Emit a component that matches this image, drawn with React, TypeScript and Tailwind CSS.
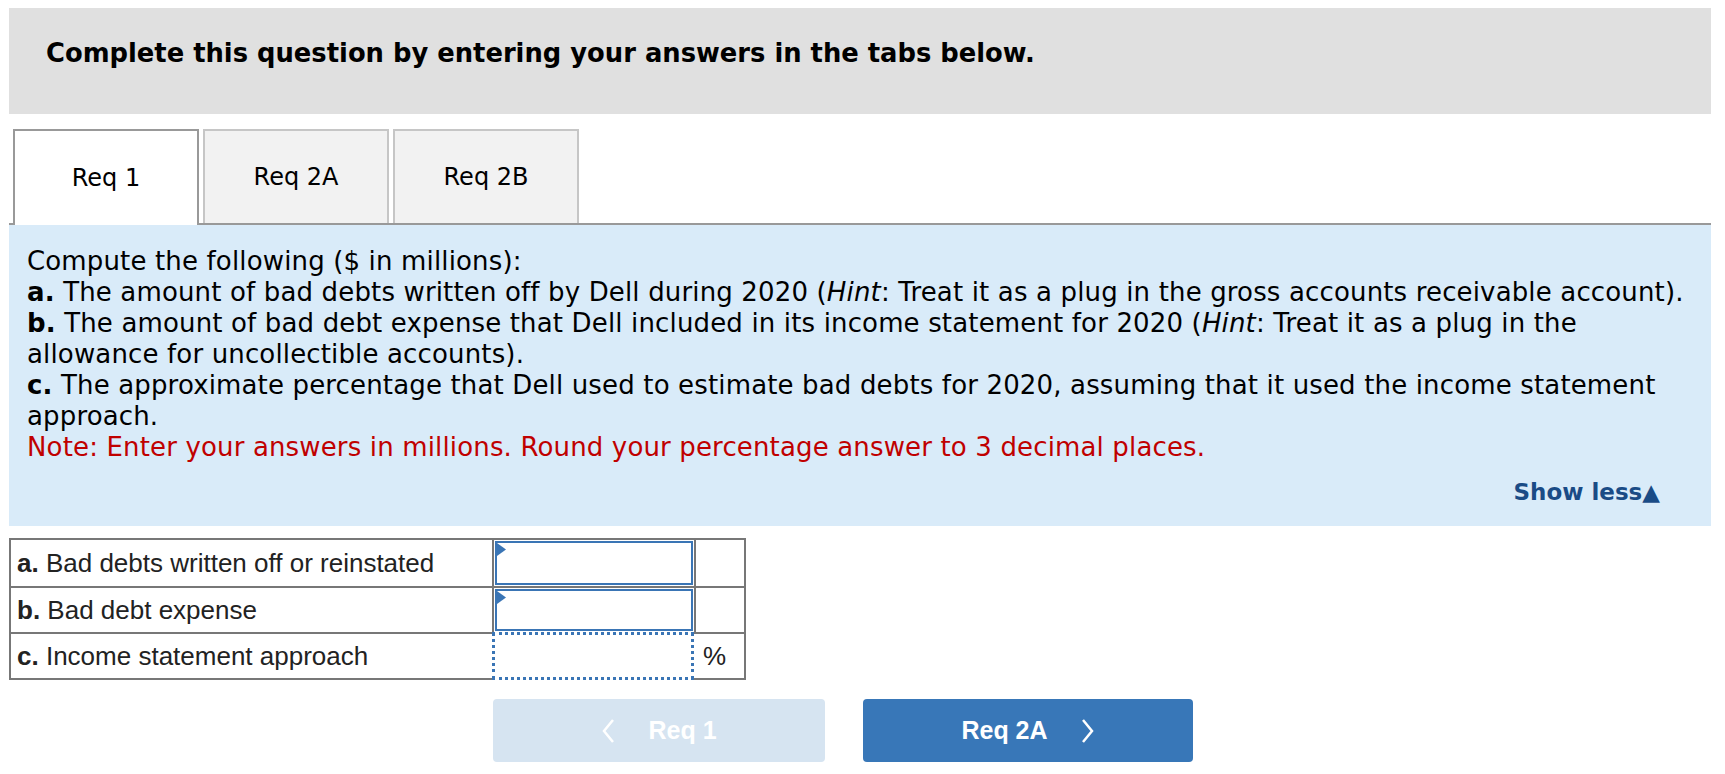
import React from "react";

const verdana = { fontFamily: '"DejaVu Sans", Verdana, sans-serif' };

function Flag() {
  return (
    <svg className="absolute left-0 top-0" width="10" height="13" viewBox="0 0 10 13">
      <path d="M0 0 L9 6.5 L0 13 Z" fill="#3a75b5" />
    </svg>
  );
}

export default function App() {
  const tabs = ["Req 1", "Req 2A", "Req 2B"];
  return (
    <div className="relative w-[1725px] h-[774px] bg-white overflow-hidden text-black" style={verdana}>
      <div className="ml-[9px] mt-[8px] w-[1702px] h-[106px] bg-[#e0e0e0] pl-[37px] pt-[30px]">
        <h1 className="text-[25.8px] leading-[30px] font-bold">
          Complete this question by entering your answers in the tabs below.
        </h1>
      </div>

      <div className="ml-[9px] mt-[15px] w-[1702px] flex gap-[4px] pl-[4px] border-b-2 border-[#999999]">
        {tabs.map((t, i) => (
          <div
            key={t}
            className={
              i === 0
                ? "w-[186px] h-[96px] -mb-[2px] bg-white border-2 border-b-0 border-[#999999] flex items-center justify-center text-[24px]"
                : "w-[186px] h-[94px] bg-[#f2f2f2] border-2 border-b-0 border-[#c6c6c6] flex items-center justify-center text-[24px]"
            }
          >
            {t}
          </div>
        ))}
      </div>

      <div className="ml-[9px] w-[1702px] bg-[#d9ebf9] pl-[18px] pr-[19px] pt-[21px] pb-[21px] text-[26px] leading-[31px] tracking-[0.15px]">
        <p>Compute the following ($ in millions):</p>
        <p>
          <b>a.</b> The amount of bad debts written off by Dell during 2020 (<i>Hint</i>: Treat it as a plug in the gross accounts receivable account).
        </p>
        <p>
          <b>b.</b> The amount of bad debt expense that Dell included in its income statement for 2020 (<i>Hint</i>: Treat it as a plug in the allowance for uncollectible accounts).
        </p>
        <p>
          <b>c.</b> The approximate percentage that Dell used to estimate bad debts for 2020, assuming that it used the income statement approach.
        </p>
        <p className="text-[#c00000]">
          Note: Enter your answers in millions. Round your percentage answer to 3 decimal places.
        </p>
        <div className="mt-[16px] pr-[32px] flex justify-end">
          <span className="text-[23px] leading-[26px] tracking-normal font-bold text-[#1a4b86]">Show less▲</span>
        </div>
      </div>

      <div className="ml-[9px] mt-[12px]" style={{ fontFamily: '"Liberation Sans", Arial, sans-serif' }}>
        <div className="w-[737px] border-2 border-[#777777] text-[26px] text-[#222222]">
          {[
            ["a.", "Bad debts written off or reinstated", "solid"],
            ["b.", "Bad debt expense", "solid"],
            ["c.", "Income statement approach", "dotted"],
          ].map(([k, label, kind], i) => (
            <div key={k} className={"flex h-[46px] " + (i > 0 ? "border-t-2 border-[#777777]" : "")}>
              <div className="w-[483px] flex items-center pl-[6px] border-r-2 border-[#777777]">
                <b>{k}</b>&nbsp;{label}
              </div>
              <div className="w-[200px] relative">
                {kind === "solid" ? (
                  <div className="absolute inset-[1px] border-2 border-[#3a75b5] bg-white">
                    <Flag />
                  </div>
                ) : (
                  <div className="absolute -left-[2px] -top-[2px] right-0 -bottom-[2px] border-[3px] border-dotted border-[#3a75b5] bg-white" />
                )}
              </div>
              <div className={"flex-1 flex items-center pl-[7px] border-l-2 " + (kind === "solid" ? "border-[#777777]" : "border-transparent")}>
                {kind === "dotted" ? "%" : ""}
              </div>
            </div>
          ))}
        </div>

        <div className="mt-[19px] ml-[484px] flex gap-[38px] font-bold text-[25px] text-white">
          <button className="w-[332px] h-[63px] rounded-[4px] bg-[#d6e4f1] flex items-center justify-center">
            <svg width="14" height="26" viewBox="0 0 14 26" className="mr-[33px]">
              <path d="M12 2 L3 13 L12 24" fill="none" stroke="white" strokeWidth="2.5" />
            </svg>
            Req 1
          </button>
          <button className="w-[330px] h-[63px] rounded-[4px] bg-[#3877b8] flex items-center justify-center">
            Req 2A
            <svg width="14" height="26" viewBox="0 0 14 26" className="ml-[33px]">
              <path d="M2 2 L11 13 L2 24" fill="none" stroke="white" strokeWidth="2.5" />
            </svg>
          </button>
        </div>
      </div>
    </div>
  );
}
